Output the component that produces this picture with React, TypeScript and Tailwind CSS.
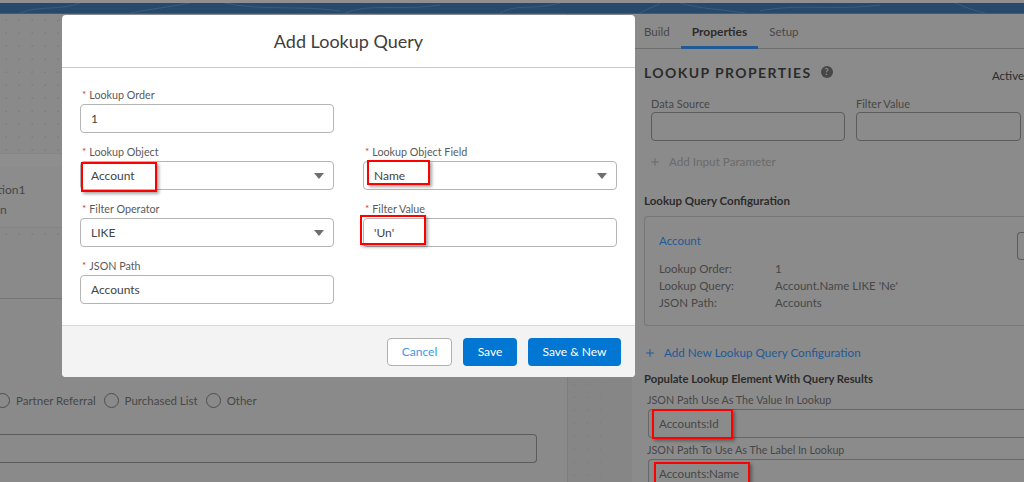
import React from 'react';
import { Plus } from 'lucide-react';

// red annotation box drawn over a field in the screenshot
const Mark = ({ className }: { className: string }) => (
  <div className={`absolute border-2 border-[#f00] shadow-[2px_2px_3px_rgba(0,0,0,0.35)] ${className}`} />
);

const Label = ({ text }: { text: string }) => (
  <div className="flex h-[17px] items-center gap-[3px] pb-[2px] pl-[2px] text-[10.75px] leading-[15px] text-[#5a5a5a]">
    <span className="text-[10px] text-[#c23934]">*</span>
    <span>{text}</span>
  </div>
);

const Field = ({ label, value, select }: { label: string; value: string; select?: boolean }) => (
  <div className="w-[254px]">
    <Label text={label} />
    <div className="flex h-[29px] items-center justify-between rounded border border-[#b5b5b5] bg-white pl-[10px] pr-[5px] text-[12px] text-[#444]">
      <span>{value}</span>
      {select && <div className="mr-[4px] h-0 w-0 border-x-[5px] border-t-[6px] border-x-transparent border-t-[#706e6b]" />}
    </div>
  </div>
);

const Radio = ({ label }: { label: string }) => (
  <div className="flex items-center gap-[6px]">
    <div className="h-[15px] w-[15px] rounded-full border border-[#4f4f4f]" />
    <span>{label}</span>
  </div>
);

const DarkInput = ({ className }: { className: string }) => (
  <div className={`h-[29px] rounded border border-[#5c5c5c] ${className}`} />
);

const dots = 'bg-[radial-gradient(#808080_1px,transparent_1px)] bg-[length:13px_13px]';

export default function App() {
  return (
    <div className="relative flex h-[482px] w-[1024px] flex-col overflow-hidden bg-[#8a8a8a] font-['Lato',sans-serif] text-[#474747]">
      {/* top bar, contour lines in the blue band */}
      <div className="h-[14px] shrink-0 border-t-[3px] border-b border-t-[#8f8f8f] border-b-[#555] bg-[#27496b]">
        <svg width="1024" height="10" fill="none" stroke="#3a5c7e" strokeWidth="1">
          <path d="M20 10C40 2 60 8 80 0M130 10C150 6 170 4 190 0M225 0C260 8 300 2 340 8M345 10C370 0 400 8 440 2M500 10C520 0 530 8 560 0M640 10C650 4 655 4 660 0M680 0C700 6 720 6 745 10M760 8C800 0 830 8 880 2M955 0C965 4 975 8 985 10" />
        </svg>
      </div>

      <div className="flex min-h-0 flex-1">
        {/* canvas */}
        <div className="flex w-[567px] shrink-0 flex-col">
          <div className={`h-[139px] shrink-0 ${dots}`} />
          <div className="h-[14px] shrink-0 border-t border-[#858585] bg-[#8e8e8e]" />
          <div className="flex h-[60px] shrink-0 flex-col justify-center gap-[4px] bg-[#8c8c8c] pt-[5px] leading-[16px]">
            <div className="-ml-[21px] text-[12px]">Section1</div>
            <div className="-ml-[34px] text-[12px]">Column</div>
          </div>
          <div className={`h-[13px] shrink-0 border-t border-[#858585] ${dots}`} />
          <div className="h-[59px] shrink-0 border-b border-[#767676]" />
          <div className="flex h-[110px] shrink-0 items-end">
            <div className="-ml-[5px] flex gap-[8px] text-[11.5px] leading-[17px]">
              <Radio label="Partner Referral" />
              <Radio label="Purchased List" />
              <Radio label="Other" />
            </div>
          </div>
          <div className="mt-[25px] h-[29px] w-[537px] shrink-0 rounded-r border border-l-0 border-[#5c5c5c]" />
        </div>

        <div className="w-[65px] shrink-0 border-l border-[#7e7e7e] bg-[#868686]">
          <div className={`h-full w-[45px] ${dots}`} />
        </div>

        {/* properties panel */}
        <div className="min-w-0 flex-1 bg-[#8b8b8b]">
          <div className="flex h-[35px] border-b border-[#6f6f6f] pl-[12px] text-[11.5px] leading-[35px]">
            <span>Build</span>
            <span className="ml-[11px] h-[35px] border-b-[3px] border-[#1f5a96] px-[11px] text-[12px] font-bold text-[#2b2b2b]">Properties</span>
            <span className="ml-[11px]">Setup</span>
          </div>
          <div className="flex h-[46px] items-center pl-[12px] text-[14px] font-bold tracking-[0.1em] text-[#2b2b2b]">
            LOOKUP PROPERTIES
            <div className="ml-[9px] flex h-[12px] w-[12px] items-center justify-center rounded-full bg-[#474747] text-[9px] font-bold tracking-normal text-[#8b8b8b]">?</div>
            <span className="ml-auto mt-[7px] text-[11.5px] font-normal tracking-normal">Active</span>
          </div>
          <div className="flex gap-[11px] pl-[19px] text-[11px] leading-[17px]">
            <div>
              <div>Data Source</div>
              <DarkInput className="w-[194px]" />
            </div>
            <div>
              <div>Filter Value</div>
              <DarkInput className="w-[165px]" />
            </div>
          </div>
          <div className="mt-[12px] flex h-[18px] items-center gap-[8px] pl-[17px] text-[11.7px] text-[#6a6a6a]">
            <Plus className="h-[12px] w-[12px]" />
            Add Input Parameter
          </div>
          <div className="mt-[21px] pl-[12px] text-[11.5px] font-bold leading-[17px] text-[#2b2b2b]">Lookup Query Configuration</div>
          <div className="relative ml-[12px] mt-[7px] h-[110px] rounded-l border border-r-0 border-[#777] pl-[14px] pt-[15px] text-[11.5px] leading-[17px]">
            <div className="text-[#1f5a96]">Account</div>
            <div className="mt-[11px] grid grid-cols-[116px_1fr]">
              <span>Lookup Order:</span>
              <span>1</span>
              <span>Lookup Query:</span>
              <span>Account.Name LIKE 'Ne'</span>
              <span>JSON Path:</span>
              <span>Accounts</span>
            </div>
            <div className="absolute left-[372px] top-[15px] h-[28px] w-[20px] rounded-l border border-r-0 border-[#5c5c5c]" />
          </div>
          <div className="mt-[18px] flex items-center gap-[8px] pl-[12px] text-[11.7px] leading-[17px] text-[#1f5a96]">
            <Plus className="h-[12px] w-[12px]" />
            Add New Lookup Query Configuration
          </div>
          <div className="mt-[10px] pl-[12px] text-[11.25px] font-bold leading-[16px] text-[#2b2b2b]">Populate Lookup Element With Query Results</div>
          <div className="mt-[5px] pl-[15px] text-[10.75px] leading-[16px]">JSON Path Use As The Value In Lookup</div>
          <div className="ml-[16px] mt-[1px] flex h-[29px] items-center rounded-l border border-r-0 border-[#666] pl-[10px] text-[11.6px]">Accounts:Id</div>
          <div className="mt-[4px] pl-[15px] text-[10.75px] leading-[16px]">JSON Path To Use As The Label In Lookup</div>
          <div className="ml-[16px] mt-[1px] flex h-[29px] items-center rounded-l border border-r-0 border-[#666] pl-[10px] text-[11.6px]">Accounts:Name</div>
        </div>
      </div>

      {/* modal */}
      <div className="absolute left-[62px] top-[15px] flex h-[362px] w-[573px] flex-col rounded bg-white">
        <div className="flex h-[53px] shrink-0 items-center justify-center border-b border-[#c9c9c9] text-[18px] text-[#3e3e3c]">
          Add Lookup Query
        </div>
        <div className="relative flex-1">
          <div className="grid grid-cols-[254px_254px] gap-x-[29px] gap-y-[11px] pl-[18px] pt-[19px]">
            <Field label="Lookup Order" value="1" />
            <div />
            <Field label="Lookup Object" value="Account" select />
            <Field label="Lookup Object Field" value="Name" select />
            <Field label="Filter Operator" value="LIKE" select />
            <Field label="Filter Value" value="'Un'" />
            <Field label="JSON Path" value="Accounts" />
          </div>
          <Mark className="left-[19px] top-[94px] h-[30px] w-[76px]" />
          <Mark className="left-[305px] top-[92px] h-[25px] w-[63px]" />
          <Mark className="left-[298px] top-[147px] h-[30px] w-[66px]" />
        </div>
        <div className="flex h-[52px] shrink-0 items-center justify-end gap-[11px] rounded-b border-t border-[#d9d9d9] bg-[#f3f3f3] pr-[14px] text-[12px]">
          <button className="h-[28px] w-[65px] rounded border border-[#b0b0b0] bg-white text-[#3f97e8]">Cancel</button>
          <button className="h-[28px] w-[54px] rounded bg-[#0176d3] text-white">Save</button>
          <button className="h-[28px] w-[93px] rounded bg-[#0176d3] text-white">Save &amp; New</button>
        </div>
      </div>

      <Mark className="left-[652px] top-[409px] h-[30px] w-[81px]" />
      <Mark className="left-[654px] top-[462px] h-[40px] w-[96px]" />
    </div>
  );
}
